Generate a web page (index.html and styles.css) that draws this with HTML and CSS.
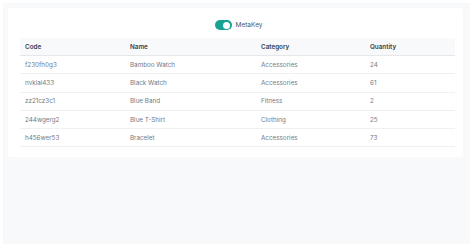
FILE: index.html
```html
<!DOCTYPE html>
<html>
<head>
<meta charset="utf-8">
<link rel="stylesheet" href="styles.css">
</head>
<body>
<div class="frame">
  <div class="card">
    <div class="toolbar">
      <span class="switch"><span class="knob"></span></span>
      <span class="label">MetaKey</span>
    </div>
    <table class="table">
      <colgroup>
        <col class="c1"><col class="c2"><col class="c3"><col class="c4">
      </colgroup>
      <thead>
        <tr><th>Code</th><th>Name</th><th>Category</th><th>Quantity</th></tr>
      </thead>
      <tbody>
        <tr><td>f230fh0g3</td><td>Bamboo Watch</td><td>Accessories</td><td>24</td></tr>
        <tr><td>nvklal433</td><td>Black Watch</td><td>Accessories</td><td>61</td></tr>
        <tr><td>zz21cz3c1</td><td>Blue Band</td><td>Fitness</td><td>2</td></tr>
        <tr><td>244wgerg2</td><td>Blue T-Shirt</td><td>Clothing</td><td>25</td></tr>
        <tr><td>h456wer53</td><td>Bracelet</td><td>Accessories</td><td>73</td></tr>
      </tbody>
    </table>
  </div>
</div>
</body>
</html>
```
FILE: styles.css
```css
html, body {
  margin: 0;
  padding: 0;
  background: #ffffff;
}
body {
  padding: 3px 4px 4px 3px;
  font-family: Inter, "Noto Sans", sans-serif;
}
.frame {
  background: #f8f9fb;
  height: 241px;
  padding: 5px 7px 0 5px;
  box-sizing: border-box;
}
.card {
  background: #ffffff;
  padding: 12px 8px 10px 12px;
  border-radius: 3px;
}
.toolbar {
  display: flex;
  justify-content: center;
  align-items: center;
  gap: 4px;
  height: 10px;
  margin-bottom: 8px;
  padding-left: 2px;
}
.switch {
  width: 17px;
  height: 10px;
  border-radius: 5px;
  background: #16a394;
  display: flex;
  align-items: center;
  justify-content: flex-end;
  padding: 0 1.5px;
  box-sizing: border-box;
}
.knob {
  width: 7px;
  height: 7px;
  border-radius: 50%;
  background: #ffffff;
}
.label {
  font-size: 6.5px;
  color: #4b5563;
}
.table {
  width: 435px;
  border-collapse: collapse;
  font-size: 6.3px;
}
.c1 { width: 105px; }
.c2 { width: 131px; }
.c3 { width: 109px; }
.c4 { width: 90px; }
th {
  text-align: left;
  font-weight: 600;
  color: #374151;
  background: #f8f9fa;
  height: 17px;
  padding: 0 5px;
  border-bottom: 1px solid #e5e7eb;
}
td {
  color: #727a86;
  height: 17.3px;
  padding: 0 5px;
  border-bottom: 1px solid #eef0f2;
}
```
